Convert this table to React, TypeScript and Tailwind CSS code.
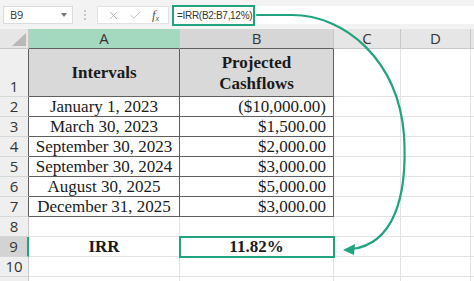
import { X, Check } from "lucide-react";

const GRID = "grid grid-cols-[29px_151px_154px_67px_70px_1fr]";

type Row = { n: number; a: string; b: string };

const ROWS: Row[] = [
  { n: 2, a: "January 1, 2023", b: "($10,000.00)" },
  { n: 3, a: "March 30, 2023", b: "$1,500.00" },
  { n: 4, a: "September 30, 2023", b: "$2,000.00" },
  { n: 5, a: "September 30, 2024", b: "$3,000.00" },
  { n: 6, a: "August 30, 2025", b: "$5,000.00" },
  { n: 7, a: "December 31, 2025", b: "$3,000.00" },
];

function RowHead({ n, dark, active }: { n?: number; dark?: boolean; active?: boolean }) {
  return (
    <div
      className={`flex items-end justify-center border-b border-b-[#d6d6d6] text-[15px] text-[#333] font-['Open_Sans',sans-serif] leading-none
        ${active ? "bg-[#d3d3d3] border-r-2 border-r-[#21a37f]" : "bg-[#efefef] border-r"}
        ${dark ? "border-r-[#5f5f5f]" : active ? "" : "border-r-[#c8c8c8]"}`}
    >
      <span className="pb-[2px]">{n}</span>
    </div>
  );
}

function Blank() {
  return <div className="border-r border-b border-[#e2e2e2] bg-white" />;
}

export default function App() {
  return (
    <div className="relative w-[474px] h-[281px] overflow-hidden bg-[#f3f3f3] font-['Liberation_Serif',serif]">
      {/* ── Formula bar ─────────────────────────── */}
      <div className="flex h-[29px] items-center pl-[3px] pt-[1px]">
        <div className="flex h-[18px] w-[70px] items-center justify-between border border-[#dcdcdc] bg-white pl-[6px] pr-[5px] font-['Open_Sans',sans-serif] text-[11px] text-[#333]">
          <span>B9</span>
          <span className="h-0 w-0 border-x-[3px] border-t-[4px] border-x-transparent border-t-[#777]" />
        </div>
        <div className="ml-[5px] flex w-[14px] flex-col items-center gap-[2px]">
          <span className="h-[2px] w-[2px] rounded-full bg-[#bbb]" />
          <span className="h-[2px] w-[2px] rounded-full bg-[#bbb]" />
          <span className="h-[2px] w-[2px] rounded-full bg-[#bbb]" />
        </div>
        <div className="ml-[5px] flex h-[18px] w-[72px] items-center justify-around border border-[#e2e2e2] bg-white px-[4px]">
          <X size={13} strokeWidth={1.6} className="text-[#b5b5b5]" />
          <Check size={13} strokeWidth={1.6} className="text-[#b5b5b5]" />
          <span className="font-['Liberation_Serif',serif] text-[13px] italic text-[#555]">
            f<sub className="text-[8px]">x</sub>
          </span>
        </div>
        <div className="ml-[3px] flex h-[18px] flex-1 items-center bg-white">
          <div className="flex h-[21px] w-[83px] items-center whitespace-nowrap border-2 border-[#21a37f] bg-white pl-[3px] font-['Liberation_Sans',sans-serif] text-[10px] tracking-[-0.3px] text-[#333]">
            =IRR(B2:B7,12%)
          </div>
        </div>
      </div>

      {/* ── Column headers ──────────────────────── */}
      <div className={`${GRID} h-[20px] font-['Open_Sans',sans-serif] text-[15px] text-[#333]`}>
        <div className="relative border-r border-b border-[#c8c8c8] bg-[#e6e6e6]">
          <svg className="absolute bottom-[2px] right-[2px]" width="14" height="13" viewBox="0 0 14 13">
            <polygon points="14,0 14,13 0,13" fill="#b9b9b9" />
          </svg>
        </div>
        <div className="flex items-center justify-center border-r border-r-[#c8c8c8] border-b border-b-[#5f5f5f] bg-[#a5d9bf] leading-none">A</div>
        <div className="flex items-center justify-center border-r border-r-[#c8c8c8] border-b border-b-[#5f5f5f] bg-[#d6d6d6] leading-none">B</div>
        <div className="flex items-center justify-center border-r border-b border-[#c8c8c8] bg-[#e6e6e6] leading-none">C</div>
        <div className="flex items-center justify-center border-r border-b border-[#c8c8c8] bg-[#e6e6e6] leading-none">D</div>
        <div className="border-b border-[#c8c8c8] bg-[#e6e6e6]" />
      </div>

      {/* ── Sheet ───────────────────────────────── */}
      <div className="bg-white">
        <div className={`${GRID} h-[48px]`}>
          <RowHead n={1} dark />
          <div className="flex items-center justify-center border-r border-b border-[#5f5f5f] bg-[#d9d9d9] text-[17px] font-bold text-[#1a1a1a]">
            Intervals
          </div>
          <div className="flex flex-col items-center justify-center border-r border-b border-[#5f5f5f] bg-[#d9d9d9] text-[17px] font-bold leading-[21px] text-[#1a1a1a]">
            <span>Projected</span>
            <span>Cashflows</span>
          </div>
          <Blank />
          <Blank />
          <div className="border-b border-[#e2e2e2]" />
        </div>

        {ROWS.map((r) => (
          <div key={r.n} className={`${GRID} h-[20px]`}>
            <RowHead n={r.n} dark />
            <div className="flex items-center justify-center whitespace-nowrap border-r border-b border-[#5f5f5f] text-[17px] leading-none text-[#1a1a1a]">
              {r.a}
            </div>
            <div className="flex items-center justify-end whitespace-nowrap border-r border-b border-[#5f5f5f] pr-[7px] text-[17px] leading-none text-[#1a1a1a]">
              {r.b}
            </div>
            <Blank />
            <Blank />
            <div className="border-b border-[#e2e2e2]" />
          </div>
        ))}

        <div className={`${GRID} h-[20px]`}>
          <RowHead n={8} />
          <Blank />
          <Blank />
          <Blank />
          <Blank />
          <div className="border-b border-[#e2e2e2]" />
        </div>

        <div className={`${GRID} h-[20px]`}>
          <RowHead n={9} active />
          <div className="flex items-center justify-center border-r border-b border-[#e2e2e2] text-[17px] font-bold leading-none text-[#1a1a1a]">
            IRR
          </div>
          <div className="relative z-10 flex items-center justify-center border-r border-b border-[#e2e2e2] text-[17px] font-bold leading-none text-[#1a1a1a] outline-2 -outline-offset-1 outline-[#21a37f]">
            11.82%
          </div>
          <Blank />
          <Blank />
          <div className="border-b border-[#e2e2e2]" />
        </div>

        <div className={`${GRID} h-[20px]`}>
          <RowHead n={10} />
          <Blank />
          <Blank />
          <Blank />
          <Blank />
          <div className="border-b border-[#e2e2e2]" />
        </div>

        {/* partial row below, cut by the window */}
        <div className={`${GRID} h-[20px]`}>
          <RowHead />
          <Blank />
          <Blank />
          <Blank />
          <Blank />
          <div className="border-b border-[#e2e2e2]" />
        </div>
      </div>

      {/* ── Callout arrow ───────────────────────── */}
      <svg className="pointer-events-none absolute inset-0 z-20" width="474" height="281" viewBox="0 0 474 281">
        <path
          d="M257 15 L292 15 C345 15 398 60 404 135 C408 200 392 244 352 249"
          fill="none"
          stroke="#21a37f"
          strokeWidth="2.2"
          strokeLinecap="round"
        />
        <polygon points="343,250 355,244 354,255" fill="#21a37f" />
      </svg>
    </div>
  );
}
